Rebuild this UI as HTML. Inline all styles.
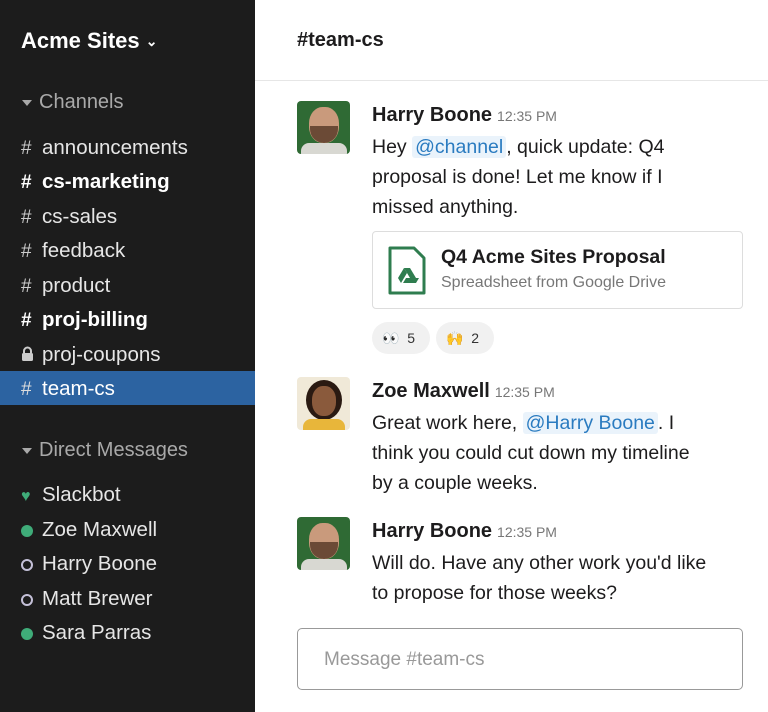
<!DOCTYPE html>
<html><head><meta charset="utf-8"><style>
*{margin:0;padding:0;box-sizing:border-box}
body{width:768px;height:712px;overflow:hidden;font-family:"Liberation Sans",sans-serif;background:#fff;position:relative}
#sb{position:absolute;left:0;top:0;width:255px;height:712px;background:#1c1c1c;color:#e8e8e8}
.a{position:absolute;white-space:nowrap}
.it{position:absolute;left:0;width:255px;height:34px;font-size:20.5px;line-height:34px;padding-left:21px;color:#e6e6e6}
.it .h{display:inline-block;width:21px;color:#ccc;font-size:19px}
.b{font-weight:bold;color:#fff}
.sec{font-size:20px;color:#a9a9a9}
.tri{display:inline-block;width:0;height:0;border-left:5px solid transparent;border-right:5px solid transparent;border-top:6px solid #a9a9a9;margin-right:7px;vertical-align:middle}
.dot{display:inline-block;width:12px;height:12px;border-radius:50%;margin-right:9px;vertical-align:-1px}
.g{background:#3fac79}
.o{border:2px solid #c4c0d8}
#main{position:absolute;left:255px;top:0;right:0;bottom:0}
.name{font-weight:bold;font-size:20px;color:#1d1c1d}
.time{font-size:14px;color:#777;font-weight:normal;margin-left:5px}
.txt{font-size:19.5px;line-height:30px;color:#1d1c1d}
.men{color:#2a7bc0;background:#eaf3fb;border-radius:3px;padding:0 3px}
.av{position:absolute;width:53px;height:53px;border-radius:4px;overflow:hidden}
.rx{position:absolute;height:32px;border-radius:16px;background:#f1f1f1;font-size:14px;line-height:32px;color:#333;padding-left:10px}
</style></head><body>
<div id="sb">
<div class="a" style="left:21px;top:28px;font-size:22px;font-weight:bold;color:#fff">Acme Sites <span style="font-size:14px;vertical-align:2px">⌄</span></div>
<div class="a sec" style="left:22px;top:91px"><span class="tri"></span>Channels</div>
<div class="it" style="top:131px"><span class="h">#</span>announcements</div>
<div class="it b" style="top:165px"><span class="h" style="color:#fff">#</span>cs-marketing</div>
<div class="it" style="top:200px"><span class="h">#</span>cs-sales</div>
<div class="it" style="top:234px"><span class="h">#</span>feedback</div>
<div class="it" style="top:269px"><span class="h">#</span>product</div>
<div class="it b" style="top:303px"><span class="h" style="color:#fff">#</span>proj-billing</div>
<div class="it" style="top:338px"><span class="h"><svg width="13" height="15" viewBox="0 0 13 15"><path d="M3 7V5a3.5 3.5 0 0 1 7 0v2" stroke="#ccc" stroke-width="2" fill="none"/><rect x="1" y="7" width="11" height="8" rx="1.5" fill="#ccc"/></svg></span>proj-coupons</div>
<div class="it" style="top:371px;height:34px;background:#2c63a1;color:#fff;line-height:36px"><span class="h" style="color:#ddd">#</span>team-cs</div>
<div class="a sec" style="left:22px;top:439px"><span class="tri"></span>Direct Messages</div>
<div class="it" style="top:478px"><span style="display:inline-block;width:21px;color:#3fac79;font-size:16px">♥</span>Slackbot</div>
<div class="it" style="top:513px"><span class="dot g"></span>Zoe Maxwell</div>
<div class="it" style="top:547px"><span class="dot o"></span>Harry Boone</div>
<div class="it" style="top:582px"><span class="dot o"></span>Matt Brewer</div>
<div class="it" style="top:616px"><span class="dot g"></span>Sara Parras</div>
</div>
<div id="main">
<div class="a" style="left:42px;top:29px;font-size:20px;font-weight:bold;color:#1d1c1d">#team-cs</div>
<div class="a" style="left:0;right:0;top:80px;height:1px;background:#e6e6e6"></div>

<div class="av" style="left:42px;top:101px;background:#2f6a34"><div style="position:absolute;left:12px;top:6px;width:30px;height:36px;border-radius:45%;background:#c99a7c"></div><div style="position:absolute;left:13px;top:25px;width:28px;height:17px;border-radius:0 0 14px 14px;background:#6b4a36"></div><div style="position:absolute;left:4px;top:42px;width:46px;height:14px;border-radius:8px 8px 0 0;background:#d8d8d2"></div></div>
<div class="a" style="left:117px;top:104px"><span class="name">Harry Boone</span><span class="time">12:35 PM</span></div>
<div class="a txt" style="left:117px;top:132px">Hey <span class="men">@channel</span>, quick update: Q4<br>proposal is done! Let me know if I<br>missed anything.</div>
<div class="a" style="left:117px;top:231px;width:371px;height:78px;border:1px solid #ddd;border-radius:4px">
<svg class="a" style="left:14px;top:14px" width="40" height="50" viewBox="0 0 40 50"><path d="M3 2h24l10 10v35H3z" fill="none" stroke="#2f7d4f" stroke-width="3" stroke-linejoin="round"/><path d="M17 22h6l6 10h-6z" fill="#2f7d4f"/><path d="M17 22l-6 10 3 5 6-10z" fill="#2f7d4f"/><path d="M16 37h13l3-5H19z" fill="#2f7d4f"/></svg>
<div class="a" style="left:68px;top:14px;font-size:19.5px;font-weight:bold;color:#1d1c1d">Q4 Acme Sites Proposal</div>
<div class="a" style="left:68px;top:42px;font-size:16px;color:#777">Spreadsheet from Google Drive</div>
</div>
<div class="rx" style="left:117px;top:322px;width:58px">👀 &nbsp;5</div>
<div class="rx" style="left:181px;top:322px;width:58px">🙌 &nbsp;2</div>

<div class="av" style="left:42px;top:377px;background:#f0e9d8"><div style="position:absolute;left:9px;top:3px;width:36px;height:40px;border-radius:50%;background:#2a1a12"></div><div style="position:absolute;left:15px;top:9px;width:24px;height:30px;border-radius:45%;background:#8a5a3c"></div><div style="position:absolute;left:6px;top:42px;width:42px;height:14px;border-radius:8px 8px 0 0;background:#e8b63a"></div></div>
<div class="a" style="left:117px;top:380px"><span class="name">Zoe Maxwell</span><span class="time">12:35 PM</span></div>
<div class="a txt" style="left:117px;top:408px">Great work here, <span class="men">@Harry Boone</span>. I<br>think you could cut down my timeline<br>by a couple weeks.</div>

<div class="av" style="left:42px;top:517px;background:#2f6a34"><div style="position:absolute;left:12px;top:6px;width:30px;height:36px;border-radius:45%;background:#c99a7c"></div><div style="position:absolute;left:13px;top:25px;width:28px;height:17px;border-radius:0 0 14px 14px;background:#6b4a36"></div><div style="position:absolute;left:4px;top:42px;width:46px;height:14px;border-radius:8px 8px 0 0;background:#d8d8d2"></div></div>
<div class="a" style="left:117px;top:520px"><span class="name">Harry Boone</span><span class="time">12:35 PM</span></div>
<div class="a txt" style="left:117px;top:548px">Will do. Have any other work you'd like<br>to propose for those weeks?</div>

<div class="a" style="left:42px;top:628px;width:446px;height:62px;border:1.5px solid #999;border-radius:5px;font-size:19px;line-height:62px;padding-left:26px;color:#999">Message #team-cs</div>
</div>
</body></html>
